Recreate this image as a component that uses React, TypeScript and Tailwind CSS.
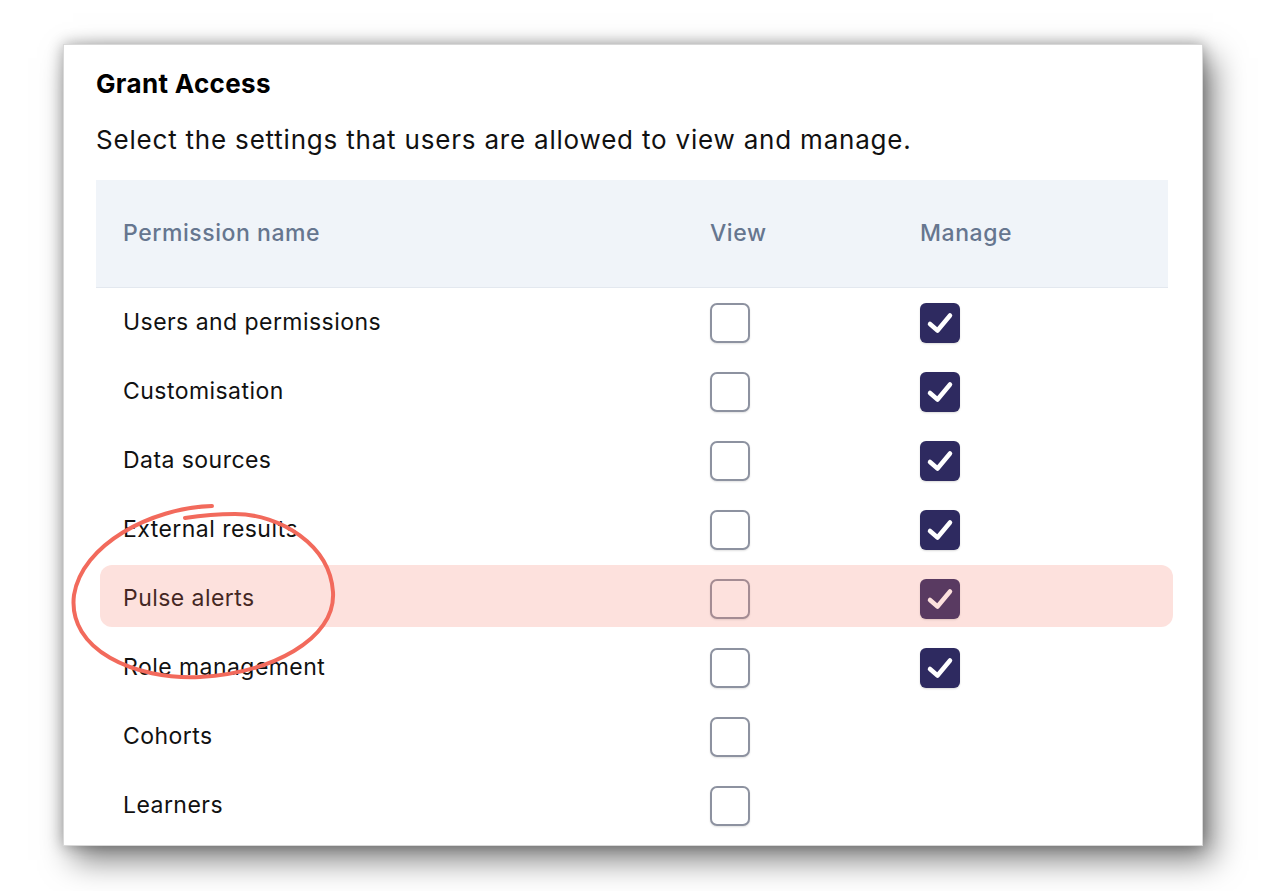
import React from "react";

const rows: { name: string; manage: boolean | null }[] = [
  { name: "Users and permissions", manage: true },
  { name: "Customisation", manage: true },
  { name: "Data sources", manage: true },
  { name: "External results", manage: true },
  { name: "Pulse alerts", manage: true },
  { name: "Role management", manage: true },
  { name: "Cohorts", manage: null },
  { name: "Learners", manage: null },
];

function Box({ checked }: { checked: boolean }) {
  if (checked) {
    return (
      <div className="w-[40px] h-[40px] rounded-[6px] bg-[#2e2a60] flex items-center justify-center shadow-[0_1px_2px_rgba(0,0,0,0.15)]">
        <svg width="40" height="40" viewBox="0 0 40 40">
          <path d="M10 21 L17.5 27.5 L30 12.5" fill="none" stroke="white" strokeWidth="4.5" strokeLinecap="round" strokeLinejoin="round" />
        </svg>
      </div>
    );
  }
  return <div className="w-[40px] h-[40px] rounded-[7px] border-2 border-[#8d92a0] bg-white shadow-[0_1px_2px_rgba(0,0,0,0.12)]" />;
}

export default function App() {
  return (
    <div className="w-[1266px] h-[891px] bg-white relative overflow-hidden" style={{ fontFamily: "Inter, 'Noto Sans', sans-serif" }}>
      <div className="absolute left-[63px] top-[44px] w-[1140px] h-[802px] bg-white border border-[#d8d8d8] shadow-[10px_14px_30px_rgba(0,0,0,0.5),0_0_14px_rgba(0,0,0,0.3)] pl-[32px] pr-[34px] pt-[23px]">
        <h1 className="text-[26px] leading-[32px] font-bold text-black tracking-[0.35px]">Grant Access</h1>
        <p className="mt-[24px] text-[26px] leading-[32px] text-[#111] tracking-[0.8px]">Select the settings that users are allowed to view and manage.</p>
        <div className="mt-[24px]">
          <div className="grid grid-cols-[614px_210px_1fr] h-[108px] items-center bg-[#f0f4f9] border-b border-[#e3e8ef] text-[23px] tracking-[0.55px] font-medium text-[#66768f]">
            <div className="pl-[27px]">Permission name</div>
            <div>View</div>
            <div>Manage</div>
          </div>
          {rows.map((r) => (
            <div key={r.name} className="grid grid-cols-[614px_210px_1fr] h-[69px] items-center text-[23px] tracking-[0.45px] text-[#111]">
              <div className="pl-[27px]">{r.name}</div>
              <div><Box checked={false} /></div>
              <div>{r.manage !== null && <Box checked={r.manage} />}</div>
            </div>
          ))}
        </div>
      </div>
      <div className="absolute left-[100px] top-[565px] w-[1073px] h-[62px] rounded-[12px] bg-[#f67664] opacity-[0.22] pointer-events-none" />
      <svg className="absolute left-0 top-0 pointer-events-none" width="1266" height="891" viewBox="0 0 1266 891">
        <path
          d="M212 506 C150 508, 82 545, 74 595 C 67 650, 135 680, 200 677 C 270 673, 336 640, 333 592 C 330 545, 280 514, 235 514 C 215 514, 198 516, 185 518"
          fill="none"
          stroke="#f26a5c"
          strokeWidth="4"
          strokeLinecap="round"
        />
      </svg>
    </div>
  );
}
